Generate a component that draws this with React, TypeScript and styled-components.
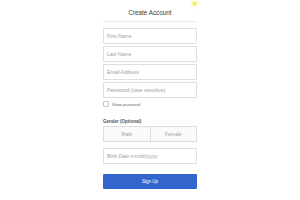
import React from 'react'
import styled, { createGlobalStyle } from 'styled-components'

const Global = createGlobalStyle`
    html, body {
        margin: 0;
        padding: 0;
        background: #ffffff;
        font-family: "Liberation Sans", Arial, sans-serif;
    }
`

const Page = styled.div`
    width: 300px;
    height: 200px;
    position: relative;
    overflow: hidden;
    background: #fff;
`

const Form = styled.div`
    width: 94px;
    margin: 0 auto;
    padding-top: 8px;
    display: flex;
    flex-direction: column;
`

const Title = styled.div`
    font-size: 6.3px;
    color: #3a3a3a;
    text-align: center;
    line-height: 9px;
    padding-bottom: 4px;
    border-bottom: 1px solid #ebebeb;
    margin-bottom: 6px;
`

const Inputs = styled.div`
    display: flex;
    flex-direction: column;
    gap: 2px;
`

const Field = styled.div`
    height: 16px;
    box-sizing: border-box;
    border: 1px solid #dedede;
    border-radius: 1px;
    padding-left: 3px;
    display: flex;
    align-items: center;
    font-size: 5px;
    color: #a0a0a0;
`

const CheckRow = styled.div`
    display: flex;
    align-items: center;
    gap: 3px;
    margin-top: 3px;
    font-size: 4px;
    color: #666;
`

const Box = styled.span`
    width: 4px;
    height: 4px;
    border: 1px solid #c4c4c4;
    border-radius: 1px;
`

const Label = styled.div`
    font-size: 4.5px;
    font-weight: bold;
    color: #555;
    margin-top: 12px;
    margin-bottom: 2px;
`

const Toggle = styled.div`
    display: flex;
    height: 16px;
    border: 1px solid #dedede;
    box-sizing: border-box;
    background: #fafafa;
`

const Option = styled.div<{ $first?: boolean }>`
    flex: 1;
    display: flex;
    align-items: center;
    justify-content: center;
    font-size: 5px;
    color: #a0a0a0;
    border-left: ${p => (p.$first ? 'none' : '1px solid #dedede')};
`

const Birth = styled(Field)`
    margin-top: 6px;
`

const Button = styled.div`
    margin-top: 10px;
    height: 15px;
    background: #3366cc;
    border-radius: 1px;
    color: #fff;
    font-size: 4.5px;
    display: flex;
    align-items: center;
    justify-content: center;
`

const Dot = styled.span`
    position: absolute;
    left: 193px;
    top: 2px;
    width: 3px;
    height: 3px;
    border-radius: 50%;
    background: #f2e23a;
    box-shadow: 0 0 3px 2px rgba(250, 240, 120, 0.5);
`

export default function App() {
    return (
        <Page>
            <Global />
            <Dot />
            <Form>
                <Title>Create Account</Title>
                <Inputs>
                    <Field>First Name</Field>
                    <Field>Last Name</Field>
                    <Field>Email Address</Field>
                    <Field>Password (case sensitive)</Field>
                </Inputs>
                <CheckRow>
                    <Box />
                    Show password
                </CheckRow>
                <Label>Gender (Optional)</Label>
                <Toggle>
                    <Option $first>Male</Option>
                    <Option>Female</Option>
                </Toggle>
                <Birth>Birth Date mm/dd/yyyy</Birth>
                <Button>Sign Up</Button>
            </Form>
        </Page>
    )
}
